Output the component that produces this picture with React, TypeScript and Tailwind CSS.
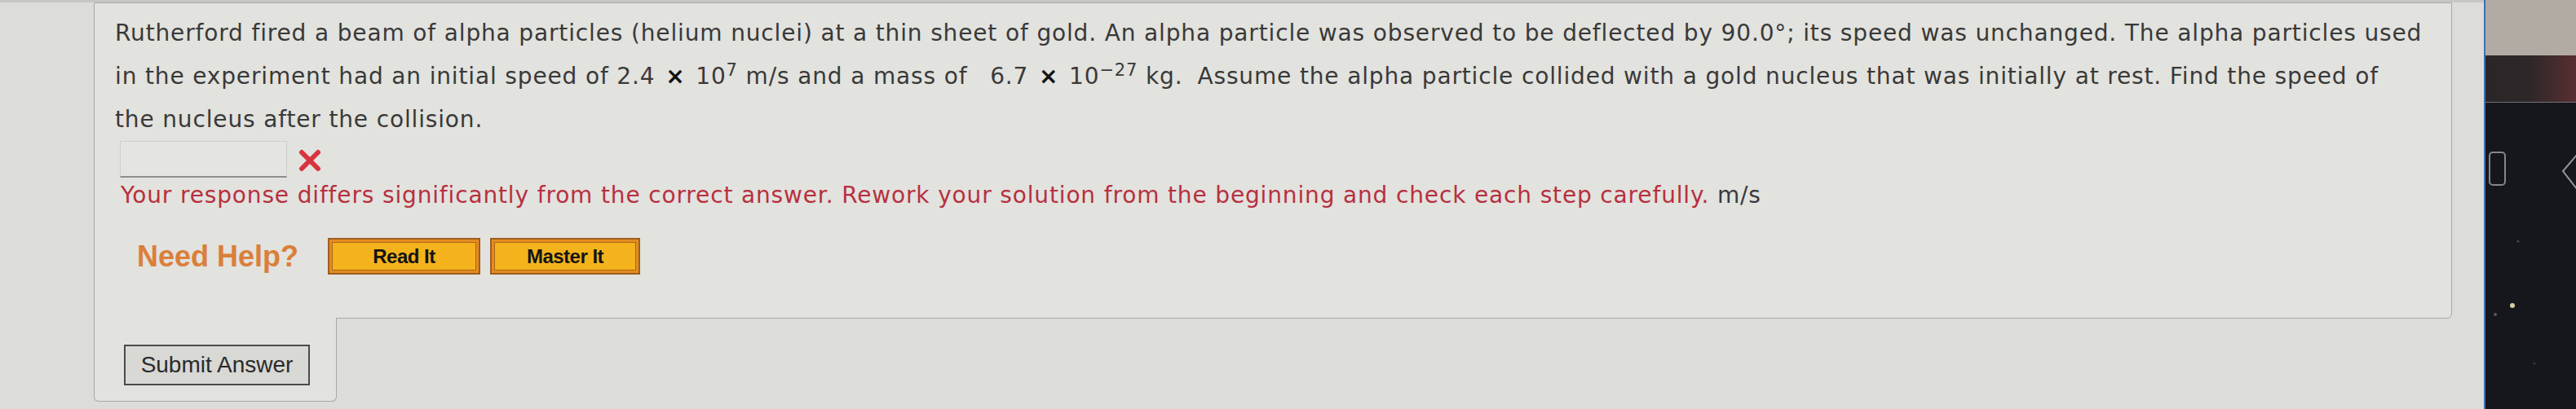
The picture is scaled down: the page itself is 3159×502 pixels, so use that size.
export default function App() {
  return (
    <div className="flex w-[3159px] h-[502px] overflow-hidden bg-[#dcdcd8]">
      <div className="w-[3046px] h-full flex flex-col bg-[#dcdcd8]">
        <div className="h-[3px] bg-[#c6c6c2]" />
        <div className="pl-[115px] flex flex-col">
          <div className="w-[2892px] h-[388px] bg-[#e2e2de] border border-[#a8a8a4] rounded-br-[6px] pt-[10px] pl-[25px] font-['DejaVu_Sans',Verdana,sans-serif] text-[28px] tracking-[0.85px] text-[#393939]">
            <div className="leading-[53px] whitespace-nowrap">
              <div>
                Rutherford fired a beam of alpha particles (helium nuclei) at a thin sheet of gold. An alpha particle was observed to be deflected by 90.0°; its speed was unchanged. The alpha particles used
              </div>
              <div>
                in the experiment had an initial speed of 2.4 <span className="mx-[3px] font-bold text-[#111]">×</span> 10<sup>7</sup> m/s and a mass of <span className="ml-[18px]">6.7</span> <span className="mx-[3px] font-bold text-[#111]">×</span> 10<sup>−27</sup> kg.<span className="ml-[18px]">Assume</span> the alpha particle collided with a gold nucleus that was initially at rest. Find the speed of
              </div>
              <div>the nucleus after the collision.</div>
            </div>
            <div className="flex items-center ml-[6px] h-[45px]">
              <div className="w-[205px] h-[45px] bg-[#e4e4e0] border border-[#cfcfcb] border-b-2 border-b-[#8e8e8a]" />
              <svg className="ml-[13px] mt-[2px]" width="30" height="28" viewBox="0 0 30 28">
                <path d="M5 4 L25 24 M25 4 L5 24" stroke="#d83440" strokeWidth="6" strokeLinecap="round" />
              </svg>
            </div>
            <div className="mt-[4px] ml-[7px] leading-[36px] whitespace-nowrap text-[#b7303f]">
              Your response differs significantly from the correct answer. Rework your solution from the beginning and check each step carefully. <span className="text-[#3a3a3a]">m/s</span>
            </div>
            <div className="mt-[34px] ml-[27px] flex items-center h-[45px] font-['Liberation_Sans',Arial,sans-serif] tracking-normal">
              <div className="w-[234px] text-[36px] leading-[45px] font-bold text-[#da7f3a]">Need Help?</div>
              <div className="w-[187px] h-[45px] bg-[#e58c1e] border-2 border-[#9c5e24] p-[3px] flex">
                <div className="flex-1 bg-[#f4b31c] border border-[#a9661a] flex items-center justify-center text-[24px] font-bold text-[#141414] tracking-[-0.5px]">
                  Read It
                </div>
              </div>
              <div className="ml-[12px] w-[184px] h-[45px] bg-[#e58c1e] border-2 border-[#9c5e24] p-[3px] flex">
                <div className="flex-1 bg-[#f4b31c] border border-[#a9661a] flex items-center justify-center text-[24px] font-bold text-[#141414] tracking-[-0.5px]">
                  Master It
                </div>
              </div>
            </div>
          </div>
          <div className="-mt-px w-[298px] h-[103px] bg-[#e2e2de] border border-t-0 border-[#a8a8a4] rounded-b-[6px] pt-[33px] pl-[36px]">
            <div className="w-[228px] h-[50px] border-2 border-[#4b4b4b] bg-[#d8d8d5] flex items-center justify-center font-['Liberation_Sans',Arial,sans-serif] text-[28px] text-[#2a2a2a]">
              Submit Answer
            </div>
          </div>
        </div>
      </div>
      <div className="flex-1 h-full flex flex-col border-l-2 border-[#3e6fb8]">
        <div className="h-[68px] bg-[#b1aba4]" />
        <div className="h-[57px] bg-gradient-to-r from-[#2a2628] via-[#2e2729] to-[#5a2e30]" />
        <div className="h-px bg-[#727274]" />
        <div className="flex-1 bg-[#15171c]">
          <svg width="111" height="376" viewBox="0 0 111 376">
            <rect x="5" y="61" width="19" height="40" rx="4" fill="none" stroke="#85858a" strokeWidth="2" />
            <path d="M112 64 L95 84 L112 106" fill="none" stroke="#96969a" strokeWidth="2" />
            <circle cx="33" cy="249" r="3" fill="#d6cf9e" />
            <circle cx="12" cy="260" r="2" fill="#5a5a5e" />
            <circle cx="40" cy="170" r="1.5" fill="#4a4a4e" />
            <circle cx="60" cy="320" r="1.5" fill="#3a3a3e" />
          </svg>
        </div>
      </div>
    </div>
  );
}
